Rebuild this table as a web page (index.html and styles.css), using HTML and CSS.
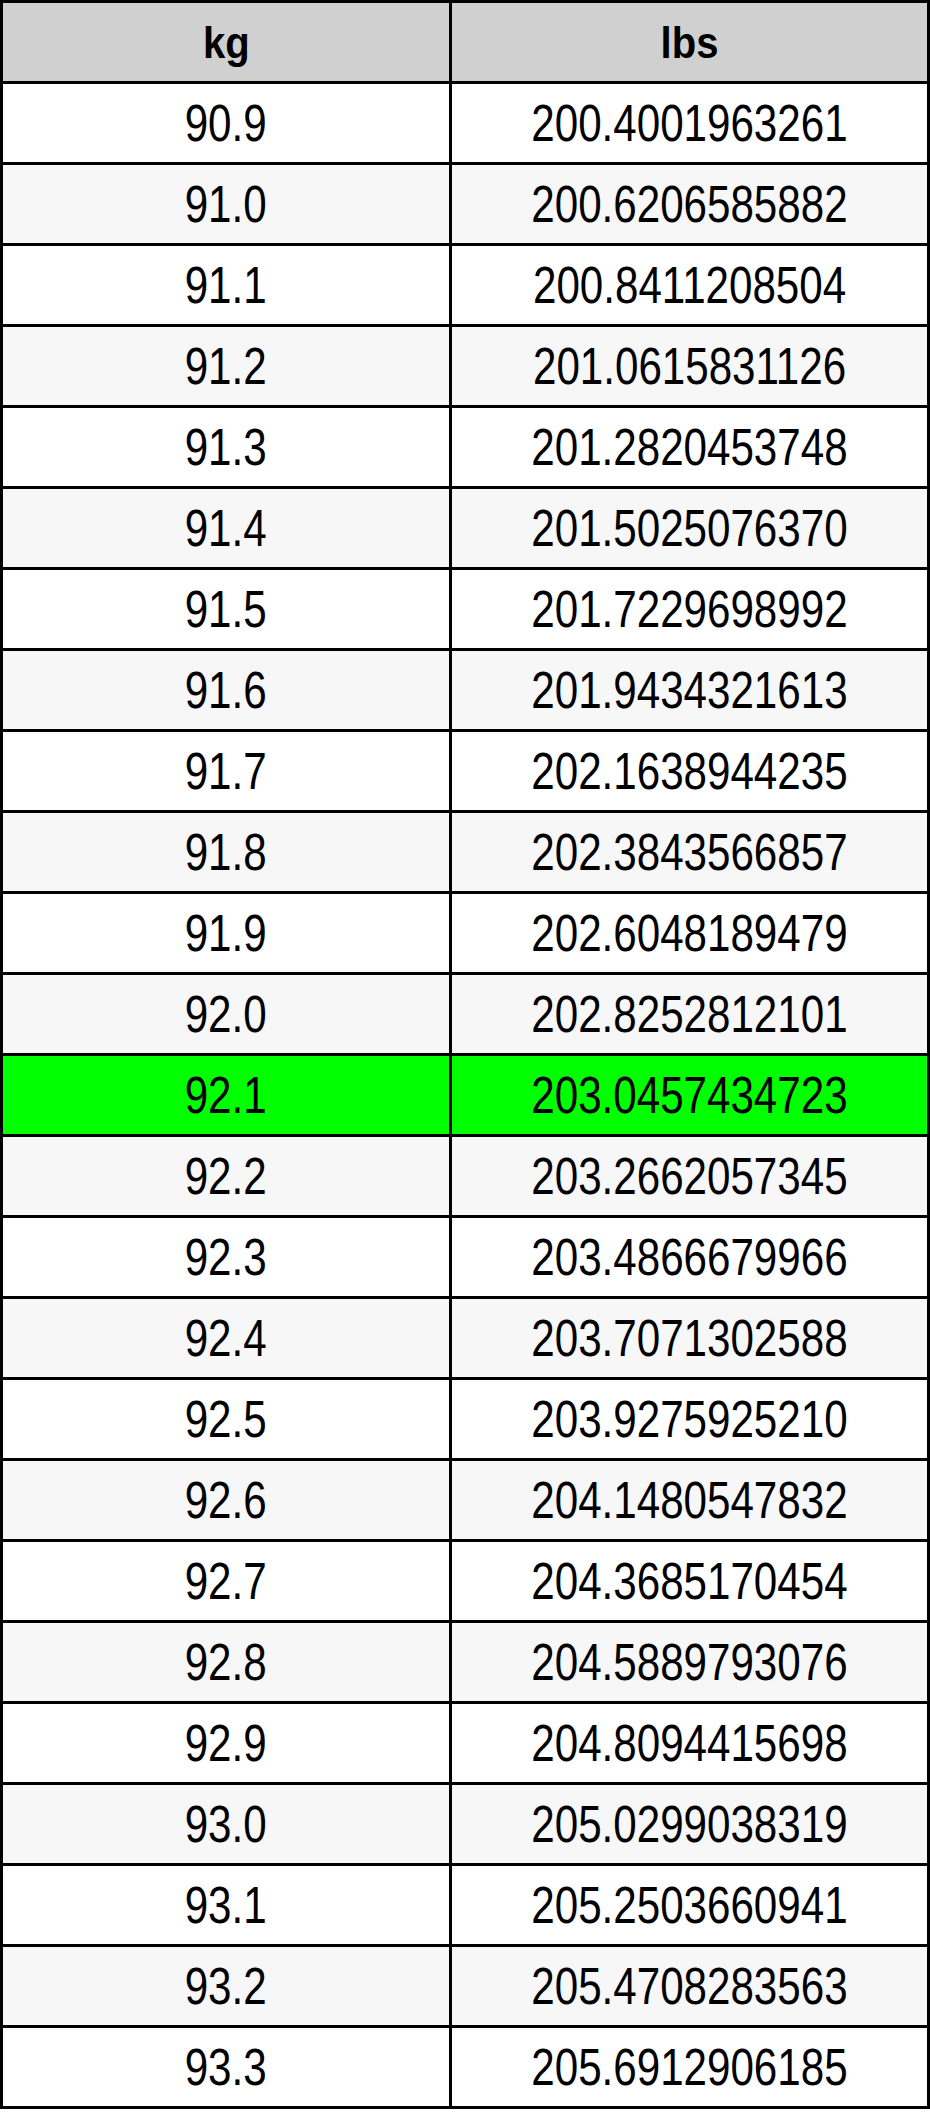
FILE: index.html
```html
<!DOCTYPE html>
<html lang="en">
<head>
<meta charset="utf-8">
<title>kg to lbs</title>
<link rel="stylesheet" href="styles.css">
</head>
<body>
<table class="conv">
<thead>
<tr><th class="c1"><span class="h">kg</span></th><th class="c2"><span class="h">lbs</span></th></tr>
</thead>
<tbody>
<tr><td><span class="n">90.9</span></td><td><span class="n">200.4001963261</span></td></tr>
<tr><td><span class="n">91.0</span></td><td><span class="n">200.6206585882</span></td></tr>
<tr><td><span class="n">91.1</span></td><td><span class="n">200.8411208504</span></td></tr>
<tr><td><span class="n">91.2</span></td><td><span class="n">201.0615831126</span></td></tr>
<tr><td><span class="n">91.3</span></td><td><span class="n">201.2820453748</span></td></tr>
<tr><td><span class="n">91.4</span></td><td><span class="n">201.5025076370</span></td></tr>
<tr><td><span class="n">91.5</span></td><td><span class="n">201.7229698992</span></td></tr>
<tr><td><span class="n">91.6</span></td><td><span class="n">201.9434321613</span></td></tr>
<tr><td><span class="n">91.7</span></td><td><span class="n">202.1638944235</span></td></tr>
<tr><td><span class="n">91.8</span></td><td><span class="n">202.3843566857</span></td></tr>
<tr><td><span class="n">91.9</span></td><td><span class="n">202.6048189479</span></td></tr>
<tr><td><span class="n">92.0</span></td><td><span class="n">202.8252812101</span></td></tr>
<tr class="hl"><td><span class="n">92.1</span></td><td><span class="n">203.0457434723</span></td></tr>
<tr><td><span class="n">92.2</span></td><td><span class="n">203.2662057345</span></td></tr>
<tr><td><span class="n">92.3</span></td><td><span class="n">203.4866679966</span></td></tr>
<tr><td><span class="n">92.4</span></td><td><span class="n">203.7071302588</span></td></tr>
<tr><td><span class="n">92.5</span></td><td><span class="n">203.9275925210</span></td></tr>
<tr><td><span class="n">92.6</span></td><td><span class="n">204.1480547832</span></td></tr>
<tr><td><span class="n">92.7</span></td><td><span class="n">204.3685170454</span></td></tr>
<tr><td><span class="n">92.8</span></td><td><span class="n">204.5889793076</span></td></tr>
<tr><td><span class="n">92.9</span></td><td><span class="n">204.8094415698</span></td></tr>
<tr><td><span class="n">93.0</span></td><td><span class="n">205.0299038319</span></td></tr>
<tr><td><span class="n">93.1</span></td><td><span class="n">205.2503660941</span></td></tr>
<tr><td><span class="n">93.2</span></td><td><span class="n">205.4708283563</span></td></tr>
<tr><td><span class="n">93.3</span></td><td><span class="n">205.6912906185</span></td></tr>
</tbody>
</table>
</body>
</html>
```
FILE: styles.css
```css
html, body {
  margin: 0;
  padding: 0;
  background: #ffffff;
}

.conv {
  width: 930px;
  box-sizing: border-box;
  table-layout: fixed;
  border-collapse: separate;
  border-spacing: 0;
  border-top: 3px solid #000;
  border-left: 3px solid #000;
  font-family: "Liberation Sans", Arial, sans-serif;
  color: #000;
}

.conv th,
.conv td {
  border-right: 3px solid #000;
  border-bottom: 3px solid #000;
  text-align: center;
  vertical-align: middle;
  padding: 0;
  white-space: nowrap;
}

.conv th {
  height: 78px;
  background: #d0d0d0;
  font-weight: bold;
  font-size: 45px;
  line-height: 1;
}

.conv th.c1 {
  width: 449px;
  box-sizing: border-box;
}

.conv td {
  height: 78px;
  font-size: 51px;
  line-height: 1;
}

.conv .h {
  display: inline-block;
  transform: scaleX(0.89);
  transform-origin: center;
}

.conv .n {
  display: inline-block;
  transform: scaleX(0.826);
  transform-origin: center;
}

.conv tbody tr:nth-child(even) td {
  background: #f7f7f7;
}

.conv tbody tr.hl td {
  background: #00ff00;
}
```
